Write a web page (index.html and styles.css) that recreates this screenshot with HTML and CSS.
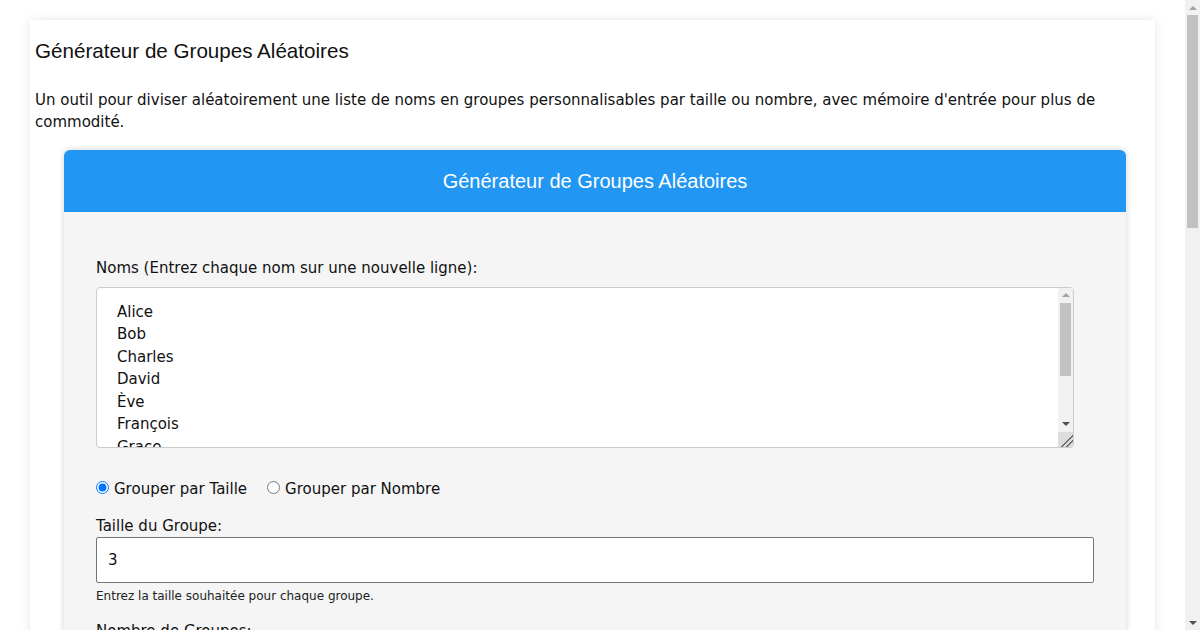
FILE: index.html
```html
<!DOCTYPE html>
<html lang="fr">
<head>
<meta charset="utf-8">
<title>Générateur de Groupes Aléatoires</title>
<link rel="stylesheet" href="styles.css">
</head>
<body>
<div class="page">
  <h1 class="page-title">Générateur de Groupes Aléatoires</h1>
  <p class="page-intro">Un outil pour diviser aléatoirement une liste de noms en groupes personnalisables par taille ou nombre, avec mémoire d'entrée pour plus de commodité.</p>

  <div class="card">
    <div class="card-header">Générateur de Groupes Aléatoires</div>
    <div class="card-body">
      <div class="group group-names">
        <label class="field-label names-label" for="names">Noms (Entrez chaque nom sur une nouvelle ligne):</label>
        <div class="names-field">
          <textarea id="names" class="names-input">Alice
Bob
Charles
David
Ève
François
Grace
Hugo
Isabelle
Julien
Karine</textarea>
          <div class="vscroll vscroll-field" aria-hidden="true">
            <div class="vscroll-btn"><span class="arrow-up"></span></div>
            <div class="vscroll-track"><div class="vscroll-thumb thumb-field"></div></div>
            <div class="vscroll-btn"><span class="arrow-down"></span></div>
          </div>
        </div>
      </div>

      <div class="group radio-row">
        <label class="radio-label"><input type="radio" name="mode" class="radio" checked>Grouper par Taille</label>
        <label class="radio-label"><input type="radio" name="mode" class="radio">Grouper par Nombre</label>
      </div>

      <div class="group">
        <label class="field-label" for="size">Taille du Groupe:</label>
        <input id="size" class="text-input" type="text" value="3">
        <div class="help">Entrez la taille souhaitée pour chaque groupe.</div>
      </div>

      <div class="group">
        <label class="field-label" for="count">Nombre de Groupes:</label>
        <input id="count" class="text-input" type="text" value="2" disabled>
        <div class="help">Entrez le nombre de groupes souhaité.</div>
      </div>

      <div class="group actions">
        <button class="btn btn-primary" type="button">Générer les Groupes</button>
        <button class="btn btn-secondary" type="button">Effacer</button>
      </div>

      <div class="results">
        <h2 class="results-title">Groupes Générés</h2>
        <div class="result-grid">
          <div class="result-card"><div class="result-name">Groupe 1</div><div>Charles</div><div>Julien</div><div>Alice</div></div>
          <div class="result-card"><div class="result-name">Groupe 2</div><div>Hugo</div><div>Ève</div><div>Karine</div></div>
          <div class="result-card"><div class="result-name">Groupe 3</div><div>Bob</div><div>Isabelle</div><div>Grace</div></div>
          <div class="result-card"><div class="result-name">Groupe 4</div><div>François</div><div>David</div></div>
        </div>
      </div>
    </div>
  </div>
</div>

<div class="vscroll vscroll-page" aria-hidden="true">
  <div class="vscroll-btn"><span class="arrow-up"></span></div>
  <div class="vscroll-track"><div class="vscroll-thumb thumb-page"></div></div>
  <div class="vscroll-btn"><span class="arrow-down"></span></div>
</div>
</body>
</html>
```

FILE: styles.css
```css
html, body {
  margin: 0;
  padding: 0;
  background: #ffffff;
}

body {
  font-family: "DejaVu Sans", sans-serif;
  font-size: 15px;
  line-height: 1.5;
  color: #111;
}

::-webkit-resizer {
  background-color: #dcdcdc;
  background-image:
    linear-gradient(135deg, transparent 58%, #6e6e6e 58%, #6e6e6e 64%, transparent 64%, transparent 76%, #6e6e6e 76%, #6e6e6e 82%, transparent 82%);
}

/* classic scrollbar look-alikes */
.vscroll {
  display: flex;
  flex-direction: column;
  width: 15px;
  background: #f1f1f1;
}

.vscroll-page {
  position: fixed;
  top: 0;
  right: 0;
  height: 100vh;
}

.vscroll-field {
  position: absolute;
  top: 1px;
  right: 1px;
  bottom: 16px;
}

.vscroll-btn {
  display: flex;
  align-items: center;
  justify-content: center;
  height: 15px;
  flex: none;
}

.arrow-up {
  width: 0;
  height: 0;
  border-left: 4px solid transparent;
  border-right: 4px solid transparent;
  border-bottom: 4px solid #a3a3a3;
}

.arrow-down {
  width: 0;
  height: 0;
  border-left: 4px solid transparent;
  border-right: 4px solid transparent;
  border-top: 4px solid #505050;
}

.vscroll-track {
  flex: 1;
  padding: 0 2px;
}

.vscroll-thumb {
  background: #c1c1c1;
}

.thumb-page {
  height: 213px;
}

.thumb-field {
  height: 73px;
}

.page {
  margin: 20px 45px 20px 30px;
  padding: 5px 5px 24px;
  background: #fff;
  box-shadow: 0 0 10px rgba(0, 0, 0, 0.1);
}

.page-title {
  font-family: "Liberation Sans", Arial, sans-serif;
  font-weight: normal;
  font-size: 20.6px;
  line-height: 1.4;
  margin: 12px 0 23px;
  color: #111;
}

.page-intro {
  margin: 0 0 16px;
}

.card {
  width: 1062px;
  margin-left: 29px;
  background: #f5f5f5;
  border-radius: 6px;
  overflow: hidden;
  box-shadow: 0 0 6px rgba(0, 0, 0, 0.18);
}

.card-header {
  background: #2196f3;
  color: #fff;
  text-align: center;
  font-family: "Liberation Sans", Arial, sans-serif;
  font-size: 20px;
  line-height: 22px;
  padding: 20px;
}

.card-body {
  padding: 45px 32px 32px;
}

.group {
  margin-bottom: 15px;
}

.field-label {
  display: block;
  line-height: 22px;
}

.names-label {
  margin-bottom: 8px;
}

.group-names {
  margin-bottom: 30px;
}

.names-field {
  position: relative;
  width: 978px;
}

.names-input {
  display: block;
  box-sizing: border-box;
  width: 978px;
  height: 161px;
  margin: 0;
  padding: 13px 36px 12px 20px;
  border: 1px solid #ccc;
  border-radius: 4px;
  font-family: "DejaVu Sans", sans-serif;
  font-size: 15px;
  line-height: 1.5;
  color: #111;
  background: #fff;
  overflow: hidden;
}

.radio-row {
  display: flex;
  margin-bottom: 15px;
}

.radio-label {
  margin-right: 20px;
}

.radio {
  margin: 3px 5px 0 0;
}

.text-input {
  display: block;
  box-sizing: border-box;
  width: 100%;
  height: 46px;
  margin: 0;
  padding: 0 11px;
  border: 1px solid #767676;
  border-radius: 2px;
  font-family: "DejaVu Sans", sans-serif;
  font-size: 15px;
  color: #111;
  background: #fff;
}

.text-input:disabled {
  background: #fff;
  color: #111;
}

.help {
  margin-top: 5px;
  font-size: 12px;
  line-height: 1.4;
  color: #222;
}

.actions {
  display: flex;
  gap: 10px;
  margin-top: 20px;
}

.btn {
  font-family: "DejaVu Sans", sans-serif;
  font-size: 15px;
  padding: 12px 22px;
  border: none;
  border-radius: 4px;
  color: #fff;
}

.btn-primary {
  background: #2196f3;
}

.btn-secondary {
  background: #9e9e9e;
}

.results {
  margin-top: 20px;
  min-height: 820px;
}

.results-title {
  font-family: "Liberation Sans", Arial, sans-serif;
  font-weight: normal;
  font-size: 20px;
  margin: 0 0 15px;
}

.result-grid {
  display: grid;
  grid-template-columns: repeat(2, 1fr);
  gap: 15px;
}

.result-card {
  background: #fff;
  border: 1px solid #ddd;
  border-radius: 4px;
  padding: 12px 16px;
}

.result-name {
  font-weight: bold;
  margin-bottom: 6px;
}
```
